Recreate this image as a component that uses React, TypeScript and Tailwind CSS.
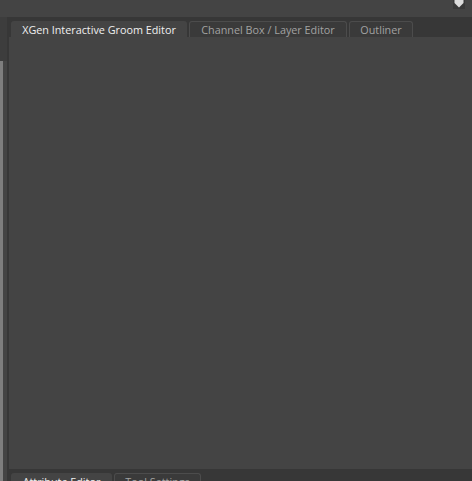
import React from "react";

const font = { fontFamily: '"Open Sans", "Liberation Sans", Arial, sans-serif' };

function Tab({ label, active, w }: { label: string; active?: boolean; w: string }) {
  return (
    <div
      className={
        "h-[16px] flex items-center justify-center pt-[2px] rounded-t-[3px] text-[10.8px] leading-none " +
        w +
        (active
          ? " bg-[#444444] text-[#f0f0f0]"
          : " bg-[#3a3a3a] text-[#a2a2a2] border border-b-0 border-[#4c4c4c]")
      }
    >
      {label}
    </div>
  );
}

export default function App() {
  return (
    <div className="w-[472px] h-[481px] bg-[#444444] flex flex-col overflow-hidden" style={font}>
      {/* top strip */}
      <div className="h-[17px] flex justify-end pr-[7px] shrink-0">
        <div className="w-[12px] h-[9px] bg-[#393939] flex items-start justify-center">
          <svg width="10" height="8" viewBox="0 0 10 8" className="block">
            <path d="M0.5 0 H9.5 V3 L5 7.5 L0.5 3 Z" fill="#dcdcdc" />
          </svg>
        </div>
      </div>
      <div className="flex flex-1 min-h-0">
        {/* left column */}
        <div className="w-[7px] flex flex-col shrink-0">
          <div className="h-[44px] bg-[#3d3d3d]" />
          <div className="flex-1 flex">
            <div className="w-[3px] bg-[#7e7e7e]" />
            <div className="flex-1 bg-[#444444]" />
          </div>
        </div>
        <div className="w-[2px] bg-[#373737] shrink-0" />
        {/* main */}
        <div className="flex-1 flex flex-col min-w-0">
          <div className="h-[20px] bg-[#373737] flex items-end gap-[2px] pl-[2px] shrink-0">
            <Tab label="XGen Interactive Groom Editor" active w="w-[176px]" />
            <Tab label="Channel Box / Layer Editor" w="w-[158px]" />
            <Tab label="Outliner" w="w-[64px]" />
          </div>
          <div className="flex-1 bg-[#444444]" />
          <div className="h-[12px] bg-[#373737] flex items-end gap-[2px] pl-[2px] shrink-0 overflow-hidden">
            <div className="flex items-start h-[8px] overflow-visible gap-[2px]">
              <div className="w-[101px] h-[16px] pt-[2px] rounded-t-[3px] bg-[#444444] text-[#f0f0f0] text-[10.8px] leading-none flex items-center justify-center">
                Attribute Editor
              </div>
              <div className="w-[87px] h-[16px] pt-[2px] rounded-t-[3px] bg-[#3a3a3a] border border-b-0 border-[#4c4c4c] text-[#a2a2a2] text-[10.8px] leading-none flex items-center justify-center">
                Tool Settings
              </div>
            </div>
          </div>
        </div>
      </div>
    </div>
  );
}
